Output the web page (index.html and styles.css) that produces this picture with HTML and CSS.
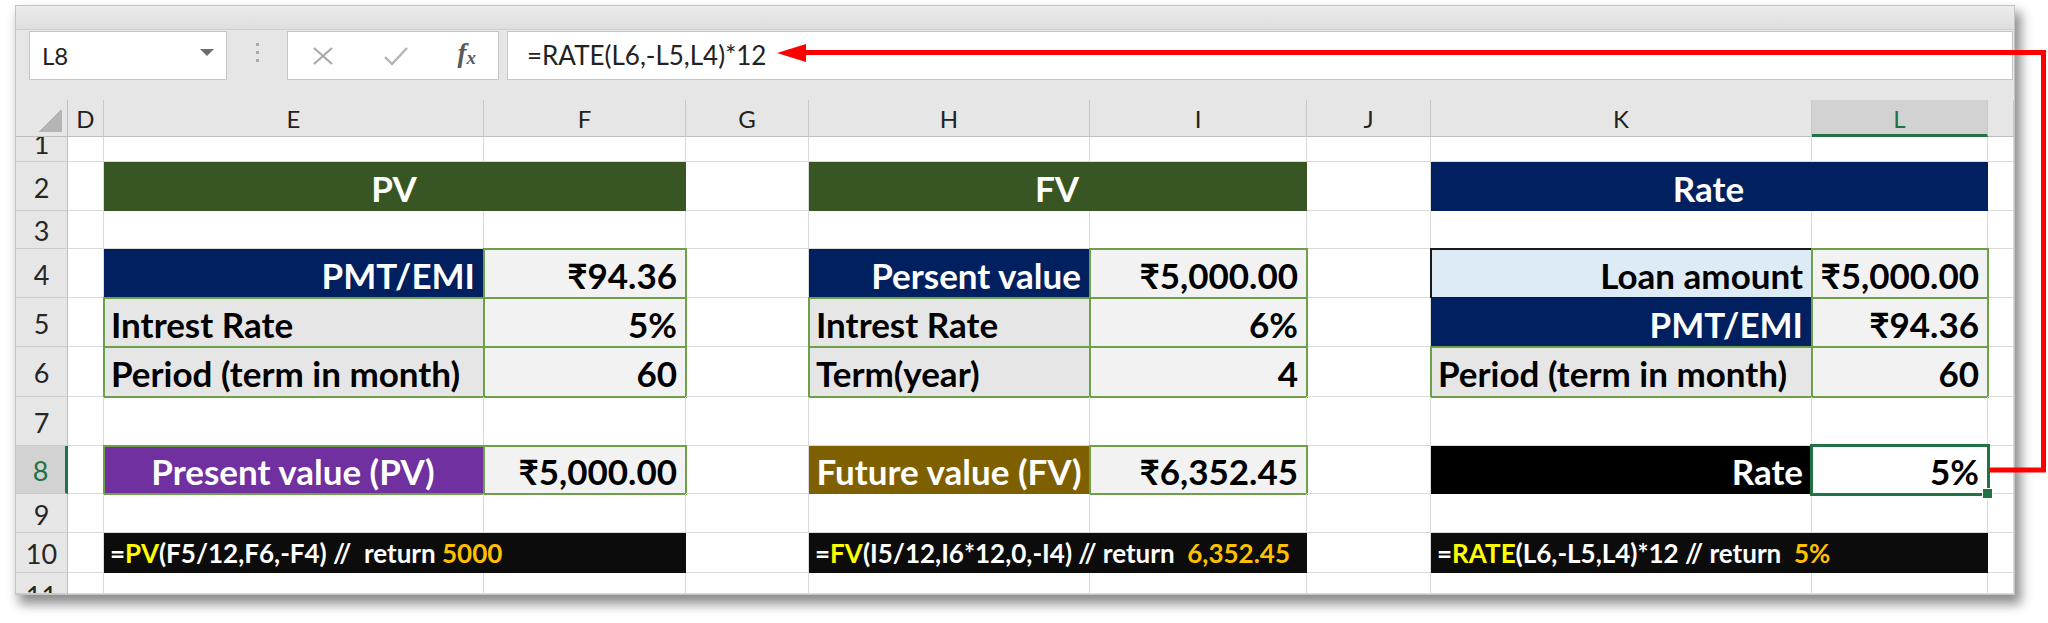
FILE: index.html
```html
<!DOCTYPE html>
<html lang="en">
  <head>
    <meta charset="UTF-8" />
    <meta name="viewport" content="width=device-width, initial-scale=1.0" />
    <title>PV FV RATE</title>
    <link rel="stylesheet" href="styles.css">
  </head>
  <body>
    <div class="window">
      <div class="ribbon"></div>

      <!-- formula bar -->
      <div class="fbar">
        <div class="namebox"><span>L8</span><span class="caret"></span></div>
        <div class="grip"><i></i><i></i><i></i></div>
        <div class="fbtns">
          <svg width="22" height="18" viewBox="0 0 22 18"><path d="M2 1 L20 17 M20 1 L2 17" stroke="#a6a6a6" stroke-width="2" fill="none"/></svg>
          <svg width="26" height="20" viewBox="0 0 26 20"><path d="M2 11 L9 18 L24 2" stroke="#b4b4b4" stroke-width="2.4" fill="none"/></svg>
          <span class="fx">f<sub>x</sub></span>
        </div>
        <div class="formula">=RATE(L6,-L5,L4)*12</div>
      </div>

      <!-- sheet -->
      <div class="sheet">
        <div class="corner"><span></span></div>
        <div class="ch">D</div><div class="ch">E</div><div class="ch">F</div><div class="ch">G</div>
        <div class="ch">H</div><div class="ch">I</div><div class="ch">J</div><div class="ch">K</div>
        <div class="ch on">L</div><div class="ch"></div>

        <div class="rh first"><span>1</span></div>
        <div class="c"></div><div class="c"></div><div class="c"></div><div class="c"></div><div class="c"></div>
        <div class="c"></div><div class="c"></div><div class="c"></div><div class="c"></div><div class="c"></div>

        <div class="rh"><span>2</span></div>
        <div class="c"></div>
        <div class="c title green span2">PV</div>
        <div class="c"></div>
        <div class="c title green span2">FV</div>
        <div class="c"></div>
        <div class="c title navy span2">Rate</div>
        <div class="c"></div>

        <div class="rh"><span>3</span></div>
        <div class="c"></div><div class="c"></div><div class="c"></div><div class="c"></div><div class="c"></div>
        <div class="c"></div><div class="c"></div><div class="c"></div><div class="c"></div><div class="c"></div>

        <div class="rh"><span>4</span></div>
        <div class="c"></div>
        <div class="c navy r">PMT/EMI</div>
        <div class="c val bx">₹94.36</div>
        <div class="c"></div>
        <div class="c navy r">Persent value</div>
        <div class="c val bx">₹5,000.00</div>
        <div class="c"></div>
        <div class="c blue r">Loan amount</div>
        <div class="c val bx">₹5,000.00</div>
        <div class="c"></div>

        <div class="rh"><span>5</span></div>
        <div class="c"></div>
        <div class="c lbl bx">Intrest Rate</div>
        <div class="c val bx">5%</div>
        <div class="c"></div>
        <div class="c lbl bx">Intrest Rate</div>
        <div class="c val bx">6%</div>
        <div class="c"></div>
        <div class="c navy r">PMT/EMI</div>
        <div class="c val bx">₹94.36</div>
        <div class="c"></div>

        <div class="rh"><span>6</span></div>
        <div class="c"></div>
        <div class="c lbl bx">Period (term in month)</div>
        <div class="c val bx">60</div>
        <div class="c"></div>
        <div class="c lbl bx">Term(year)</div>
        <div class="c val bx">4</div>
        <div class="c"></div>
        <div class="c lbl bx">Period (term in month)</div>
        <div class="c val bx">60</div>
        <div class="c"></div>

        <div class="rh"><span>7</span></div>
        <div class="c"></div><div class="c"></div><div class="c"></div><div class="c"></div><div class="c"></div>
        <div class="c"></div><div class="c"></div><div class="c"></div><div class="c"></div><div class="c"></div>

        <div class="rh on"><span>8</span></div>
        <div class="c"></div>
        <div class="c purple mid bx">Present value (PV)</div>
        <div class="c val bx">₹5,000.00</div>
        <div class="c"></div>
        <div class="c brown mid">Future value (FV)</div>
        <div class="c val bx">₹6,352.45</div>
        <div class="c"></div>
        <div class="c black r">Rate</div>
        <div class="c val active">5%</div>
        <div class="c"></div>

        <div class="rh"><span>9</span></div>
        <div class="c"></div><div class="c"></div><div class="c"></div><div class="c"></div><div class="c"></div>
        <div class="c"></div><div class="c"></div><div class="c"></div><div class="c"></div><div class="c"></div>

        <div class="rh"><span>10</span></div>
        <div class="c"></div>
        <div class="c code span2"><span>=<b>PV</b>(F5/12,F6,-F4) //&nbsp; return <em>5000</em></span></div>
        <div class="c"></div>
        <div class="c code span2"><span>=<b>FV</b>(I5/12,I6*12,0,-I4) // return&nbsp; <em>6,352.45</em></span></div>
        <div class="c"></div>
        <div class="c code span2"><span>=<b>RATE</b>(L6,-L5,L4)*12 // return&nbsp; <em>5%</em></span></div>
        <div class="c"></div>

        <div class="rh last"><span>11</span></div>
        <div class="c"></div><div class="c"></div><div class="c"></div><div class="c"></div><div class="c"></div>
        <div class="c"></div><div class="c"></div><div class="c"></div><div class="c"></div><div class="c"></div>
      </div>
    </div>

    <!-- red pointer from the cell to the formula -->
    <svg class="arrow" width="2048" height="623" viewBox="0 0 2048 623">
      <polyline points="804,52.5 2043.5,52.5 2043.5,470 1990,470" fill="none" stroke="#ff0000" stroke-width="5"/>
      <polygon points="777,53 806,44 806,62" fill="#ff0000"/>
    </svg>
  </body>
</html>
```

FILE: styles.css
```css
* {
  box-sizing: border-box;
  margin: 0;
  padding: 0;
}
body {
  background: #fff;
  font-family: Lato, "Noto Sans", sans-serif;
  position: relative;
  width: 2048px;
  height: 623px;
  overflow: hidden;
}
.window {
  margin: 5px 0 0 15px;
  width: 2000px;
  height: 590px;
  background: #e6e6e6;
  border: 1px solid #c4c4c4;
  box-shadow: 5px 8px 11px 1px rgb(0 0 0 / 45%);
  display: flex;
  flex-direction: column;
  overflow: hidden;
}
.ribbon {
  flex-shrink: 0;
  height: 24px;
  background: linear-gradient(#ececec, #dedede);
  border-bottom: 1px solid #cfcfcf;
}

/* formula bar */
.fbar {
  flex-shrink: 0;
  height: 70px;
  padding: 1px 1px 0 13px;
  display: flex;
  align-items: flex-start;
}
.namebox {
  width: 198px;
  height: 49px;
  background: #fff;
  border: 1px solid #c6c6c6;
  display: flex;
  align-items: center;
  justify-content: space-between;
  padding: 0 12px 0 12px;
  font-size: 24px;
  color: #222;
}
.caret {
  width: 0;
  height: 0;
  border-left: 7px solid transparent;
  border-right: 7px solid transparent;
  border-top: 7px solid #6d6d6d;
  margin-top: -6px;
}
.grip {
  width: 60px;
  height: 49px;
  display: flex;
  flex-direction: column;
  align-items: center;
  justify-content: center;
  gap: 5px;
  padding-bottom: 6px;
}
.grip i {
  width: 3px;
  height: 3px;
  background: #a8a8a8;
}
.fbtns {
  width: 212px;
  height: 49px;
  background: #fff;
  border: 1px solid #c6c6c6;
  display: flex;
  align-items: center;
  justify-content: space-between;
  padding: 0 22px 0 24px;
}
.fx {
  font-family: "Liberation Serif", serif;
  font-style: italic;
  font-weight: bold;
  font-size: 27px;
  color: #5a5a5a;
  margin-top: -4px;
}
.fx sub {
  font-size: 19px;
  vertical-align: -2px;
}
.formula {
  flex: 1;
  height: 49px;
  margin-left: 8px;
  background: #fff;
  border: 1px solid #c6c6c6;
  padding: 0 0 2px 19px;
  display: flex;
  align-items: center;
  font-size: 26px;
  color: #222;
}

/* sheet grid */
.sheet {
  flex: 1;
  min-height: 0;
  overflow: hidden;
  display: grid;
  grid-template-columns: 52px 36px 380px 202px 123px 281px 217px 124px 381px 176px 26px;
  grid-template-rows: 37px 25px 49px 38px 49px 49px 50px 49px 48px 39px 40px minmax(0, 1fr);
  background: #fff;
  font-weight: 700;
  font-size: 35px;
  color: #000;
}
.corner {
  background: #e6e6e6;
  border-right: 1px solid #bdbdbd;
  border-bottom: 1px solid #bdbdbd;
  padding: 10px 6px 4px 22px;
}
.corner span {
  display: block;
  width: 24px;
  height: 22px;
  background: linear-gradient(135deg, transparent 50%, #b5b5b5 50%);
}
.ch {
  background: #e6e6e6;
  border-bottom: 1px solid #bdbdbd;
  border-right: 1px solid #c9c9c9;
  display: flex;
  align-items: center;
  justify-content: center;
  font-weight: 400;
  font-size: 24px;
  color: #222;
}
.ch.on {
  background: #d2d2d2;
  border-bottom: 3px solid #217346;
  color: #217346;
  padding-top: 2px;
}
.rh {
  background: #e6e6e6;
  border-right: 1px solid #bdbdbd;
  border-bottom: 1px solid #cbcbcb;
  display: flex;
  align-items: center;
  justify-content: center;
  font-weight: 400;
  font-size: 27px;
  color: #262626;
  overflow: hidden;
  padding-top: 2px;
}
.rh.on {
  background: #d2d2d2;
  border-right: 3px solid #217346;
  color: #217346;
}
.rh.first {
  align-items: flex-start;
  padding-top: 0;
}
.rh.first span {
  margin-top: -10px;
}
.rh.last {
  align-items: flex-start;
  padding-top: 6px;
}
.c {
  border-right: 1px solid #dadada;
  border-bottom: 1px solid #dadada;
  display: flex;
  align-items: center;
  padding: 3px 8px 0 7px;
  white-space: nowrap;
  overflow: hidden;
}
.span2 {
  grid-column: span 2;
}
.r {
  justify-content: flex-end;
}
.mid {
  justify-content: center;
}
.title {
  justify-content: center;
  color: #fff;
}
.green {
  background: #375623;
  border-color: #375623;
}
.navy {
  background: #002060;
  border-color: #002060;
  color: #fff;
}
.blue {
  background: #ddebf7;
  outline: 2px solid #1a1a1a;
  outline-offset: -1px;
}
.purple {
  background: #7030a0;
  color: #fff;
}
.brown {
  background: #7f6000;
  border-color: #7f6000;
  color: #fff;
  padding: 3px 4px 0 4px;
}
.black {
  background: #000;
  border-color: #000;
  color: #fff;
}
.lbl {
  background: #e7e6e6;
}
.val {
  background: #f2f2f2;
  justify-content: flex-end;
}
.bx {
  outline: 2px solid #6e9f4a;
  outline-offset: -1px;
}
.active {
  background: #fff;
  position: relative;
  overflow: visible;
  outline: 3px solid #217346;
  outline-offset: -1px;
}
.active::after {
  content: "";
  position: absolute;
  right: -6px;
  bottom: -6px;
  width: 9px;
  height: 9px;
  background: #217346;
  border: 1px solid #fff;
}
.code {
  background: #0c0c0c;
  border-color: #0c0c0c;
  color: #fff;
  font-size: 26px;
  padding: 0 0 0 6px;
}
.code b {
  color: #ffff00;
  font-weight: 700;
}
.code em {
  color: #ffc000;
  font-style: normal;
}

.arrow {
  position: absolute;
  left: 0;
  top: 0;
  pointer-events: none;
}
```
